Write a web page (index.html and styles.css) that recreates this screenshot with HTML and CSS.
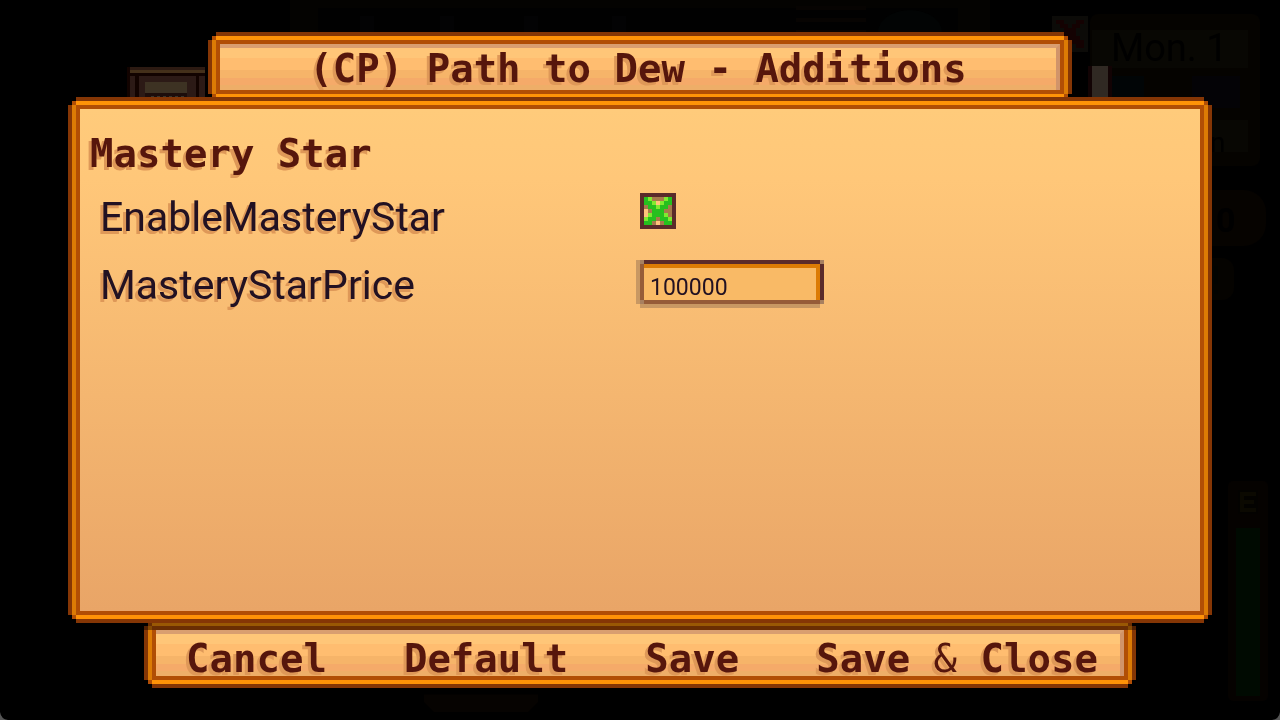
FILE: index.html
```html
<!DOCTYPE html>
<html lang="en">
<head>
    <meta charset="UTF-8">
    <meta name="viewport" content="width=device-width, initial-scale=1.0">
    <title>(CP) Path to Dew - Additions</title>
    <link rel="stylesheet" href="styles.css">
</head>
<body>
    <!-- dimmed game behind the menu -->
    <svg class="scene" viewBox="0 0 1280 720" preserveAspectRatio="xMidYMid slice" aria-hidden="true">
        <rect x="290" y="0" width="700" height="60" fill="#040301"/>
        <rect x="318" y="8" width="640" height="50" fill="#010101"/>
        <path d="M360 16h14v20h-14zM440 16h14v20h-14zM524 16h14v20h-14zM612 16h14v20h-14z" fill="#030304"/>
        <path d="M796 6h70v4h-70zM796 18h70v4h-70zM796 30h70v4h-70z" fill="#070402"/>
        <ellipse cx="910" cy="32" rx="32" ry="22" fill="#020404"/>
        <path d="M127 67h78v36h-78z" fill="#120300"/>
        <path d="M130 67h75v3h-75z" fill="#2c1a12"/>
        <path d="M130 70h75v3h-75z" fill="#44301a"/>
        <path d="M130 76h5v24h-5zM139 76h57v24h-57zM199 76h6v24h-6z" fill="#2c1a16"/>
        <path d="M145 82h42v18h-42z" fill="#3d3223"/>
        <path d="M145 93h42v8h-42z" fill="#1d0d0b"/>
        <path d="M151 97h33" stroke="#39352d" stroke-width="2" stroke-dasharray="3 3"/>
        <path d="M1052 16h36v36h-36z" fill="#0c0b08"/>
        <path d="M1056 20h8v4h4v4h4v-4h4v-4h8v4h-4v4h-4v8h4v4h4v8h-8v-4h-4v-4h-4v4h-4v4h-8v-8h4v-4h4v-8h-4v-4h-4z" fill="#140202"/>
        <rect x="1090" y="14" width="170" height="152" rx="8" fill="#050300"/>
        <rect x="1092" y="30" width="156" height="38" fill="#080703"/>
        <rect x="1112" y="76" width="32" height="32" fill="#010506"/>
        <rect x="1192" y="76" width="48" height="32" fill="#040306"/>
        <rect x="1192" y="120" width="56" height="32" fill="#080703"/>
        <text x="1111" y="61" class="scene-text">Mon. 1</text>
        <text x="1210" y="152" class="scene-text small">n</text>
        <rect x="1180" y="190" width="86" height="56" rx="22" fill="#060300"/>
        <text x="1216" y="232" class="scene-text heavy">0</text>
        <rect x="1190" y="258" width="44" height="42" rx="12" fill="#050300"/>
        <path d="M1214 266h4v18h-4zM1214 290h4v4h-4z" fill="#020301"/>
        <path d="M1092 66h16v34h-16z" fill="#302923"/>
        <path d="M1088 66h4v34h-4zM1108 66h4v34h-4z" fill="#120304"/>
        <rect x="1228" y="481" width="40" height="220" rx="5" fill="#050200"/>
        <rect x="1238" y="490" width="20" height="24" fill="#030200"/>
        <path d="M1240 492h16v4h-12v4h10v4h-10v4h12v4h-16z" fill="#0b0901"/>
        <rect x="1236" y="528" width="24" height="168" fill="#000a01"/>
        <path d="M424 694h114v8l-10 10h-94l-10-10z" fill="#060301"/>
        <path d="M0 712v8h8q-7-1-8-8zM1280 712v8h-8q7-1 8-8z" fill="#555"/>
    </svg>

    <form class="menu">
        <h1 class="frame bar title">(CP) Path to Dew - Additions</h1>

        <main class="frame panel">
            <h2>Mastery Star</h2>
            <div class="option">
                <label for="enable">EnableMasteryStar</label>
                <div class="control checkbox">
                    <input type="checkbox" id="enable" checked>
                    <svg class="mark" viewBox="0 0 7 7" shape-rendering="crispEdges" aria-hidden="true">
                        <path d="M0 0h7v7H0z" fill="#a67b4c"/>
                        <path d="M3 1h1v1H3zM0 3h1v2H0zM3 6h1v1H3z" fill="#ffc47b"/>
                        <path d="M0 0h1v1h1v1h1v1h1v-1h1v-1h1v-1h1v2h-1v1h-1v2h1v1h1v1h-2v-1h-1v-1h-1v1h-1v1h-2v-1h1v-1h1v-2h-1v-1h-1z" fill="#26c01e"/>
                        <path d="M1 0h1v1H1zM5 0h1v1H5zM2 1h1v1H2zM4 1h1v1H4zM3 2h1v1H3zM1 4h1v1H1zM5 4h1v1H5zM0 5h1v1H0zM6 5h1v1H6z" fill="#80ea30"/>
                    </svg>
                </div>
            </div>
            <div class="option">
                <label for="price">MasteryStarPrice</label>
                <div class="control">
                    <input type="text" class="textbox" id="price" value="100000">
                </div>
            </div>
        </main>

        <div class="frame bar actions">
            <button type="button">Cancel</button>
            <button type="button">Default</button>
            <button type="button">Save</button>
            <button type="button">Save <span class="amp">&amp;</span> Close</button>
        </div>
    </form>
</body>
</html>
```
FILE: styles.css
```css
* {
    box-sizing: border-box;
}
body {
    margin: 0;
    background-color: #000;
    color: #56160c;
    font-family: "DejaVu Sans Mono", monospace;
}
.scene {
    position: fixed;
    top: 0;
    left: 0;
    width: 100%;
    height: 100%;
    z-index: -1;
}
.scene-text {
    font-family: Roboto, sans-serif;
    font-size: 38px;
    font-weight: 400;
    fill: #000;
}
.scene-text.small {
    font-size: 28px;
}
.scene-text.heavy {
    font-size: 34px;
    font-weight: bold;
}
.menu {
    min-height: 100vh;
    padding: 44px 80px;
    display: flex;
    flex-direction: column;
    align-items: center;
    gap: 19px;
}

/* wooden frame, 12px wide with notched corners */
.frame {
    box-shadow:
        0 0 0 4px #b14e05,
        0 -4px 0 4px #ff9307,
        0 4px 0 4px #ff9307,
        -4px 0 0 4px #dc7b05,
        4px 0 0 4px #dc7b05,
        0 0 0 8px #b14e05,
        0 -8px 0 4px #853605,
        0 8px 0 4px #853605,
        -8px 0 0 4px #853605,
        8px 0 0 4px #853605,
        0 15px 0 4px rgba(0, 0, 0, 0.4);
}
.bar {
    height: 46px;
    margin: 0;
    border-top: 4px solid #d99e70;
    border-right: 4px solid #d1946a;
    background: linear-gradient(#ffc678 10px, #ffbd70 10px, #ffbd70 22px, #f6b469 22px, #f6b469 30px, #f5aa69 30px, #f5aa69 37px, #eeae68 37px);
    font-size: 39px;
    font-weight: bold;
    line-height: 42px;
    white-space: nowrap;
    text-shadow: -3px 3px 0 #de9858;
}
.title {
    width: calc(100% - 280px);
    text-align: center;
}
.panel {
    position: relative;
    z-index: 1;
    flex: 1;
    width: 100%;
    padding: 16px 0;
    background: linear-gradient(#ffcb7b, #ffc779 14%, #e9a567);
}
h2 {
    margin: 0 0 4px;
    padding-left: 10px;
    font-size: 39px;
    line-height: 57px;
    text-shadow: -3px 3px 0 #de9858;
}
.option {
    display: grid;
    grid-template-columns: 1fr 1fr;
    align-items: center;
    height: 56px;
    margin-bottom: 12px;
}
.option label {
    padding: 6px 0 0 20px;
    color: #221122;
    font-family: Roboto, sans-serif;
    font-size: 41px;
    font-weight: 400;
    line-height: 50px;
    text-shadow: -3px 3px 0 #de9858;
}
.control {
    display: flex;
}
.checkbox {
    position: relative;
    margin-bottom: 6px;
}
.checkbox input {
    appearance: none;
    width: 36px;
    height: 36px;
    margin: 0;
    border: 4px solid #5b2b2a;
    background-color: #ffc47b;
}
.mark {
    position: absolute;
    top: 4px;
    left: 4px;
    width: 28px;
    height: 28px;
    pointer-events: none;
}
.checkbox input:not(:checked) + .mark {
    display: none;
}
.textbox {
    width: 176px;
    height: 36px;
    margin-left: 4px;
    padding: 10px 8px 0 6px;
    border: none;
    background-color: #f9ba66;
    color: #221122;
    font-family: Roboto, sans-serif;
    font-size: 23px;
    line-height: 26px;
    outline: none;
    box-shadow:
        inset -4px 4px 0 #dc7b05,
        0 -4px 0 #5b2b2a,
        4px 0 0 #5b2b2a,
        -4px 0 0 #965c38,
        0 4px 0 #965c38,
        0 0 0 4px #a88060,
        -4px 0 0 4px #c89863,
        -2px 6px 0 2px #c89863;
}
.actions {
    display: flex;
    justify-content: center;
    gap: 77px;
    width: calc(100% - 152px);
    padding: 4px 0 0 8px;
}
button {
    padding: 0;
    border: none;
    background: none;
    color: inherit;
    font: inherit;
    text-shadow: inherit;
    cursor: pointer;
}
.amp {
    font-weight: normal;
}
```
